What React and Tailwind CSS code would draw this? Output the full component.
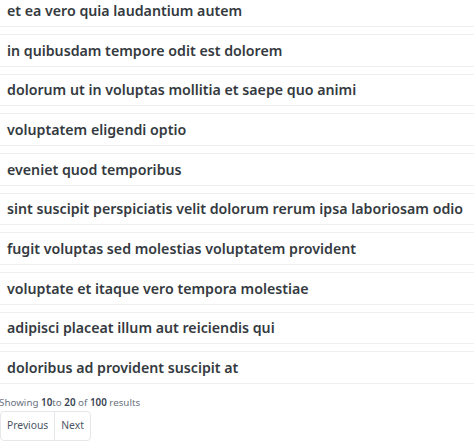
const items = [
  'et ea vero quia laudantium autem',
  'in quibusdam tempore odit est dolorem',
  'dolorum ut in voluptas mollitia et saepe quo animi',
  'voluptatem eligendi optio',
  'eveniet quod temporibus',
  'sint suscipit perspiciatis velit dolorum rerum ipsa laboriosam odio',
  'fugit voluptas sed molestias voluptatem provident',
  'voluptate et itaque vero tempora molestiae',
  'adipisci placeat illum aut reiciendis qui',
  'doloribus ad provident suscipit at',
];

export default function App() {
  return (
    <div className="w-[474px] h-[443px] overflow-hidden bg-white" style={{ fontFamily: '"Noto Sans", sans-serif' }}>
      <ul className="-mt-[5.5px] flex flex-col gap-[7px]">
        {items.map((t) => (
          <li
            key={t}
            className="h-[32.67px] flex items-center pl-[7px] border-y border-[#eeeeee] text-[14.2px] font-semibold text-[#343a40] whitespace-nowrap"
          >
            {t}
          </li>
        ))}
      </ul>
      <div className="mt-[12px] text-[9.8px] leading-[14px] text-[#6b7280] -ml-[1px] whitespace-nowrap">
        Showing <span className="font-semibold text-[#374151]">10</span>to{' '}
        <span className="font-semibold text-[#374151]">20</span> of{' '}
        <span className="font-semibold text-[#374151]">100</span> results
      </div>
      <div className="mt-[1px] inline-flex border border-[#e5e7eb] rounded-[4px] text-[10.3px] text-[#4b5563]">
        <button className="h-[28px] px-[6px] border-r border-[#e5e7eb]">Previous</button>
        <button className="h-[28px] px-[6px]">Next</button>
      </div>
    </div>
  );
}
